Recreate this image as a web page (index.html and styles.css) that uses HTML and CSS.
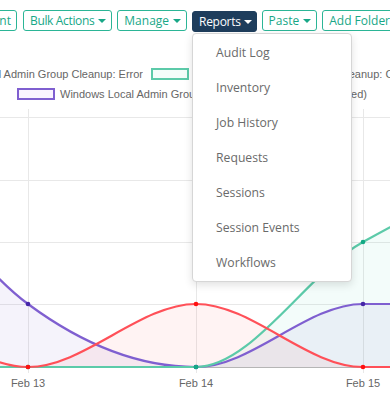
FILE: index.html
```html
<!DOCTYPE html>
<html>
<head>
<meta charset="utf-8">
<link rel="stylesheet" href="styles.css">
</head>
<body>
<div class="page">
  <div class="toolbar">
    <div class="clip-start clip-btn"><button class="btn">Add Agent</button></div>
    <button class="btn btn-tight">Bulk Actions<span class="caret"></span></button>
    <button class="btn">Manage<span class="caret"></span></button>
    <div class="dropdown">
      <button class="btn btn-dark">Reports<span class="caret"></span></button>
      <ul class="menu">
        <li>Audit Log</li>
        <li>Inventory</li>
        <li>Job History</li>
        <li>Requests</li>
        <li>Sessions</li>
        <li>Session Events</li>
        <li>Workflows</li>
      </ul>
    </div>
    <button class="btn">Paste<span class="caret"></span></button>
    <button class="btn">Add Folder</button>
  </div>

  <div class="legend">
    <div class="legend-row">
      <div class="clip-start clip-legend">
        <span class="item"><i class="swatch sw-red"></i><span>Windows Local Admin Group Cleanup: Error</span></span>
      </div>
      <span class="item"><i class="swatch sw-teal"></i><span>Windows Local Admin Group Cleanup: Completed</span></span>
    </div>
    <div class="legend-row row2">
      <span class="item"><i class="swatch sw-purple"></i><span>Windows Local Admin Group Cleanup: Pending (Not Assigned)</span></span>
    </div>
  </div>

  <svg class="chart" width="390" height="298" viewBox="0 102 390 298" xmlns="http://www.w3.org/2000/svg">
    <g stroke="#e8e8e8" stroke-width="1">
      <line x1="0" y1="115.5" x2="390" y2="115.5"/>
      <line x1="0" y1="178.5" x2="390" y2="178.5"/>
      <line x1="0" y1="240.5" x2="390" y2="240.5"/>
      <line x1="0" y1="302.5" x2="390" y2="302.5"/>
      <line x1="28.5" y1="107" x2="28.5" y2="371"/>
      <line x1="196.5" y1="107" x2="196.5" y2="371"/>
      <line x1="363.5" y1="107" x2="363.5" y2="371"/>
    </g>
    <line x1="0" y1="365.5" x2="390" y2="365.5" stroke="#b5b5b5" stroke-width="1"/>

    <!-- fills -->
    <path d="M -140 115 C -84 171 -28 260.5 28 302 C 84 343.5 140 365 196 365 C 252 365 307 302 363 302 L 420 302 L 420 365 L -140 365 Z" fill="rgba(130,96,210,0.08)"/>
    <path d="M -140 365 L 196 365 C 252 365 307 271.2 363 240 C 419 208.8 474 178 530 178 L 530 365 Z" fill="rgba(90,215,185,0.07)"/>
    <path d="M -140 302 C -84 302 -28 365 28 365 C 84 365 140 302 196 302 C 252 302 307 365 363 365 L 420 365 L -140 365 Z" fill="rgba(255,80,90,0.07)"/>

    <!-- lines -->
    <path d="M -140 115 C -84 171 -28 260.5 28 302 C 84 343.5 140 365 196 365 C 252 365 307 302 363 302 L 420 302" fill="none" stroke="#7f5fd0" stroke-width="2.2"/>
    <path d="M -140 365 L 196 365 C 252 365 307 271.2 363 240 C 419 208.8 474 178 530 178" fill="none" stroke="#5ccaa9" stroke-width="2.2"/>
    <path d="M -140 302 C -84 302 -28 365 28 365 C 84 365 140 302 196 302 C 252 302 307 365 363 365 L 420 365" fill="none" stroke="#ff5058" stroke-width="2.2"/>

    <!-- points -->
    <g fill="#4526a8">
      <circle cx="28" cy="302" r="2.3"/>
      <circle cx="196" cy="365" r="2.3"/>
      <circle cx="363" cy="302" r="2.3"/>
    </g>
    <g fill="#13a985">
      <circle cx="28" cy="365" r="2.3"/>
      <circle cx="196" cy="365" r="2.3"/>
      <circle cx="363" cy="240" r="2.3"/>
    </g>
    <g fill="#ff1010">
      <circle cx="28" cy="365" r="2.3"/>
      <circle cx="196" cy="302" r="2.3"/>
      <circle cx="363" cy="365" r="2.3"/>
    </g>

    <g class="tick" text-anchor="middle">
      <text x="28" y="385">Feb 13</text>
      <text x="196" y="385">Feb 14</text>
      <text x="363" y="385">Feb 15</text>
    </g>
  </svg>
</div>
</body>
</html>
```

FILE: styles.css
```css
html, body {
  margin: 0;
  padding: 0;
  background: #ffffff;
}
body {
  width: 390px;
  height: 400px;
  overflow: hidden;
  font-family: "Open Sans", Lato, sans-serif;
}
.page {
  width: 390px;
  height: 400px;
  overflow: hidden;
  position: relative;
}
.toolbar {
  display: flex;
  align-items: center;
  gap: 5px;
  padding-top: 9px;
  white-space: nowrap;
  position: relative;
  z-index: 2;
}
.clip-start {
  display: flex;
  justify-content: flex-end;
  overflow: hidden;
  flex-shrink: 0;
}
.clip-btn {
  width: 17px;
  margin-right: 1px;
}
.btn {
  flex-shrink: 0;
  display: inline-flex;
  align-items: center;
  height: 21px;
  box-sizing: border-box;
  margin: 0;
  padding: 0 5px 0 6px;
  border: 1px solid #2bb596;
  border-radius: 3px;
  background: #ffffff;
  color: #18a787;
  font-family: "Open Sans", Lato, sans-serif;
  font-size: 12px;
  line-height: 19px;
  white-space: nowrap;
}
.btn-tight {
  letter-spacing: -0.35px;
}
.btn-dark {
  background: #1e3d5c;
  border-color: #1e3d5c;
  color: #ffffff;
  letter-spacing: -0.3px;
  padding: 0 4px 0 6px;
}
.btn-dark .caret {
  margin-left: 3px;
}
.caret {
  display: inline-block;
  width: 0;
  height: 0;
  margin-left: 4px;
  border-left: 4px solid transparent;
  border-right: 4px solid transparent;
  border-top: 4px solid currentColor;
}
.dropdown {
  position: relative;
  flex-shrink: 0;
}
.menu {
  position: absolute;
  top: 24px;
  left: 0;
  width: 160px;
  box-sizing: border-box;
  margin: 0;
  padding: 1px 0;
  list-style: none;
  background: #ffffff;
  border: 1px solid #d6d6d6;
  border-radius: 4px;
  box-shadow: 0 3px 8px rgba(0, 0, 0, 0.12);
  letter-spacing: 0;
}
.menu li {
  height: 35px;
  line-height: 35px;
  padding-left: 23px;
  font-size: 12.2px;
  color: #6a6a6a;
}
.legend {
  margin-top: 32px;
  font-family: "Liberation Sans", Arial, sans-serif;
  font-size: 11px;
  color: #666666;
}
.legend-row {
  display: flex;
  align-items: center;
  height: 20px;
  gap: 8px;
  white-space: nowrap;
}
.clip-legend {
  width: 143px;
}
.row2 {
  padding-left: 17px;
}
.item {
  display: inline-flex;
  align-items: center;
  gap: 5px;
  flex-shrink: 0;
}
.swatch {
  display: inline-block;
  width: 38px;
  height: 12px;
  box-sizing: border-box;
  border: 2px solid;
}
.sw-red {
  border-color: #ff5058;
  background: #fff3f4;
}
.sw-teal {
  border-color: #5ccaa9;
  background: #f3fdfa;
}
.sw-purple {
  border-color: #7f5fd0;
  background: #f9f3ff;
}
.chart {
  display: block;
}
.tick text {
  font-family: "Liberation Sans", Arial, sans-serif;
  font-size: 11px;
  fill: #666666;
}
```
